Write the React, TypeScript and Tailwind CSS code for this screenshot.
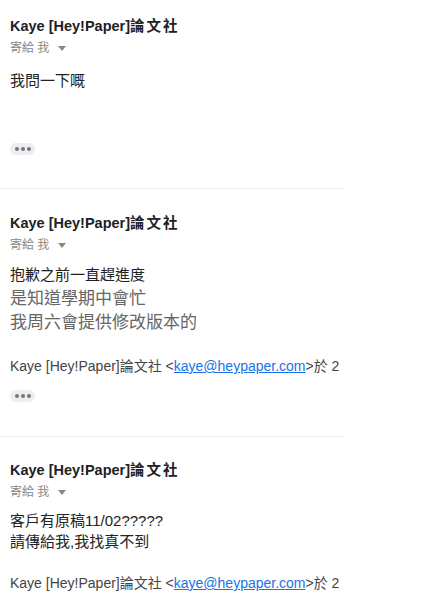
const arial = "font-['Liberation_Sans','Noto_Sans_CJK_TC',sans-serif]";

function Header() {
  return (
    <>
      <div className={`${arial} h-5 text-[14.5px] leading-5 font-bold text-[#202124] whitespace-nowrap`}>
        Kaye [Hey!Paper]<span className="tracking-[2px]">論文社</span>
      </div>
      <div className={`${arial} mt-1 flex h-4 items-center gap-[6px] text-xs leading-4 text-[#888]`}>
        <span>寄給 我</span>
        <svg width="8" height="5" viewBox="0 0 8 5" className="ml-[3px]">
          <path d="M0 0h8L4 5z" fill="#888" />
        </svg>
      </div>
    </>
  );
}

function Dots() {
  return (
    <div className="flex h-3 w-[25px] items-center justify-center gap-[2px] rounded-full bg-[#eceef1]">
      <span className="h-[4px] w-[4px] rounded-full bg-[#777]" />
      <span className="h-[4px] w-[4px] rounded-full bg-[#777]" />
      <span className="h-[4px] w-[4px] rounded-full bg-[#777]" />
    </div>
  );
}

function Signature() {
  return (
    <div className={`${arial} h-[21px] text-sm leading-[21px] text-[#444] whitespace-nowrap`}>
      Kaye [Hey!Paper]論文社 &lt;
      <a href="#" className="text-[#1a73e8] underline">kaye@heypaper.com</a>
      &gt;於 2
    </div>
  );
}

export default function App() {
  return (
    <div className="min-h-[600px] bg-white">
      <div className="w-[344px] overflow-hidden">
        <div className="h-[188px] pl-[10px] pt-4">
          <Header />
          <div className={`${arial} mt-[14px] h-[21px] text-[15px] leading-[21px] text-[#222]`}>
            我問一下嘅
          </div>
          <div className="mt-[52px]">
            <Dots />
          </div>
        </div>

        <div className="h-[248px] border-t border-[#eceff1] pl-[10px] pt-6">
          <Header />
          <div className={`${arial} mt-[10px]`}>
            <div className="h-6 text-[15px] leading-6 text-[#222]">抱歉之前一直趕進度</div>
            <div className="h-6 text-[17px] leading-6 text-[#666]">是知道學期中會忙</div>
            <div className="h-6 text-[17px] leading-6 text-[#666]">我周六會提供修改版本的</div>
          </div>
          <div className="mt-[21px]">
            <Signature />
          </div>
          <div className="mt-[13px]">
            <Dots />
          </div>
        </div>

        <div className="h-[164px] border-t border-[#eceff1] pl-[10px] pt-[23px]">
          <Header />
          <div className={`${arial} mt-[10px] text-[15px] leading-[21px] text-[#222]`}>
            <div>客戶有原稿11/02?????</div>
            <div>請傳給我,我找真不到</div>
          </div>
          <div className="mt-[21px]">
            <Signature />
          </div>
        </div>
      </div>
    </div>
  );
}
